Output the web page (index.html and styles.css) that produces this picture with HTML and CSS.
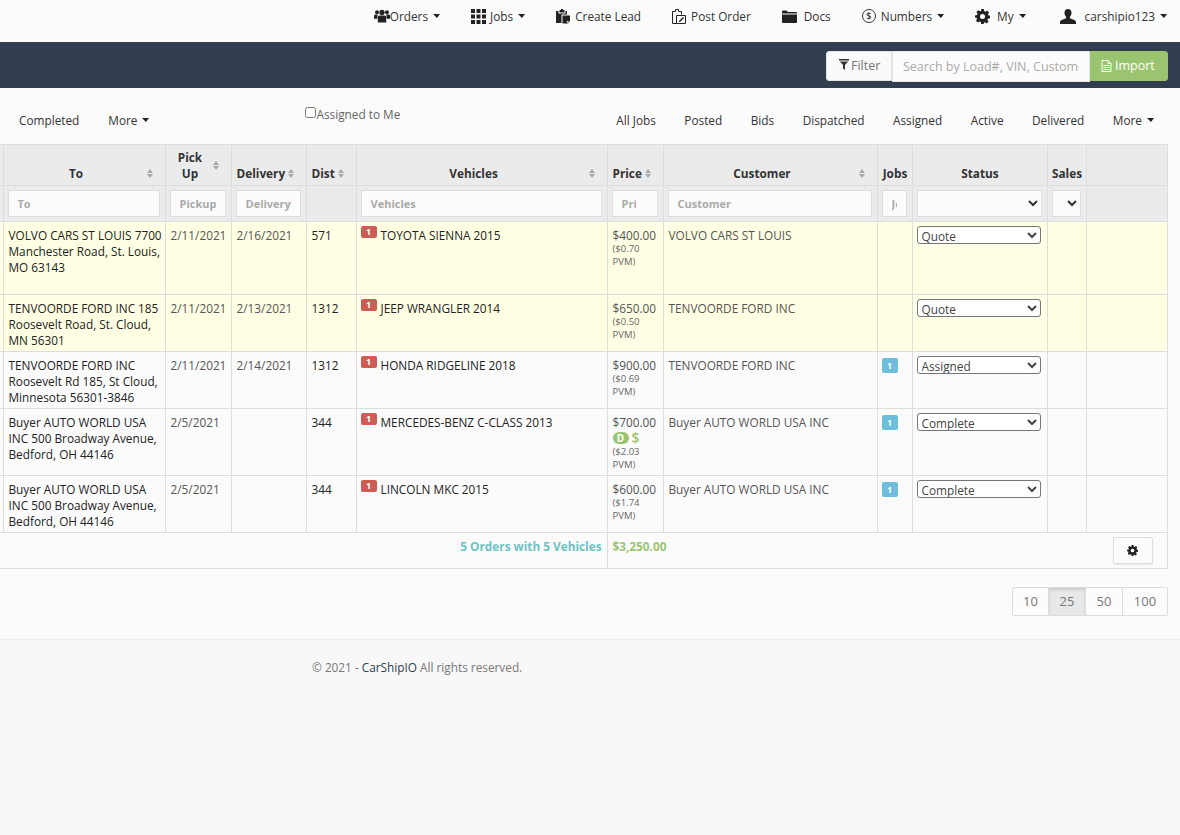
FILE: index.html
```html
<!DOCTYPE html>
<html lang="en">
<head>
<meta charset="utf-8">
<title>CarShipIO</title>
<link rel="stylesheet" href="styles.css">
</head>
<body>
<svg class="defs" width="0" height="0" aria-hidden="true">
  <symbol id="i-cog" viewBox="0 0 16 16"><path fill-rule="evenodd" d="M6.600 0h2.800l.4 2.200 1.300.6L13 1.600 15 3.600l-1.200 1.900.5 1.200 1.700.4v2.800l-2.200.4-.5 1.300 1.200 1.800-2 2-1.900-1.200-1.200.5L9.400 16H6.600l-.4-2.200-1.300-.5L3 14.500l-2-2 1.200-1.900-.5-1.200L0 9V6.800l2.200-.4.5-1.300L1.500 3.300l2-2 1.900 1.200 1.200-.5zM8 5.300a2.700 2.700 0 1 0 0 5.400 2.700 2.700 0 0 0 0-5.400z"/></symbol>
</svg>

<nav class="topnav">
  <a class="nav-item nav-orders"><svg class="ic ic-group" viewBox="0 0 17 14"><circle cx="3.200" cy="3" r="2.100"/><circle cx="13.800" cy="3" r="2.100"/><circle cx="8.500" cy="3.200" r="2.800"/><path d="M0 10V7q0-1.500 1.500-1.500h2.500L3.500 10zM17 10V7q0-1.500-1.500-1.500H13l.5 4.500z"/><path d="M4 14V8.500Q4 6.500 6 6.500h5q2 0 2 2V14z"/></svg>Orders<span class="caret"></span></a>
  <a class="nav-item"><svg class="ic ic-th" viewBox="0 0 15 15"><path d="M0 0h4v4H0zM5.500 0h4v4h-4zM11 0h4v4h-4zM0 5.500h4v4H0zM5.500 5.500h4v4h-4zM11 5.500h4v4h-4zM0 11h4v4H0zM5.500 11h4v4h-4zM11 11h4v4h-4z"/></svg>Jobs<span class="caret"></span></a>
  <a class="nav-item"><svg class="ic" viewBox="0 0 14 15"><path d="M3.500 1H5V0h2v1h1.500v2.500h-5zM0 2h2.500v2.500h7V2H11v3.500H5.500V14H0z"/><path d="M6.500 6.500H14v5.500l-2.500 2.500h-5zM11 12v2l2-2z"/></svg>Create Lead</a>
  <a class="nav-item"><svg class="ic" viewBox="0 0 14 15"><path fill="none" stroke="currentColor" d="M.5 2.500h3v-2h3v2h3v3M4.500 14.500h-4v-12M4.500 6.500h9v8h-9z"/><path d="M7 12l4-4 1 1-4 4H7z"/></svg>Post Order</a>
  <a class="nav-item"><svg class="ic ic-folder" viewBox="0 0 15 13"><path d="M0 1.500Q0 .5 1 .5h3.500l1.500 1.500h8Q15 2 15 3v.5H0zM0 4.500h15V12q0 1-1 1H1q-1 0-1-1z"/></svg>Docs</a>
  <a class="nav-item"><span class="ic-dollar">$</span>Numbers<span class="caret"></span></a>
  <a class="nav-item nav-my"><svg class="ic ic-cog"><use href="#i-cog"/></svg>My<span class="caret"></span></a>
  <a class="nav-item nav-user"><svg class="ic ic-user" viewBox="0 0 16 15"><path d="M8 0c2.300 0 3.500 1.700 3.500 3.800 0 1.700-.7 3.200-1.600 4v1.500c1.500.8 6.100 1.700 6.100 3.700v2H0v-2c0-2 4.600-2.900 6.100-3.700V7.800C5.200 7 4.500 5.500 4.500 3.800 4.500 1.700 5.700 0 8 0z"/></svg>carshipio123<span class="caret"></span></a>
</nav>

<header class="toolbar">
  <button class="btn-filter"><svg class="ic-filter" viewBox="0 0 10 11"><path d="M0 0h10v1.500H0zM.8 2.500h8.400L6 6v5L4 9.500V6z"/></svg>Filter</button>
  <input class="search" type="text" placeholder="Search by Load#, VIN, Customer">
  <button class="btn-import"><svg class="ic-file" viewBox="0 0 10 12"><path fill="none" stroke="currentColor" d="M.5.500h6l3 3v8h-9zM6.500.500v3h3M2 5.500h6M2 7.500h6M2 9.500h6"/></svg>Import</button>
</header>

<div class="tabs">
  <div class="tab-group">
    <a class="tab">Completed</a>
    <a class="tab">More<span class="caret"></span></a>
  </div>
  <label class="assigned"><input class="assigned-box" type="checkbox">Assigned to Me</label>
  <div class="tab-group">
    <a class="tab">All Jobs</a>
    <a class="tab">Posted</a>
    <a class="tab">Bids</a>
    <a class="tab">Dispatched</a>
    <a class="tab">Assigned</a>
    <a class="tab">Active</a>
    <a class="tab">Delivered</a>
    <a class="tab">More<span class="caret"></span></a>
  </div>
</div>

<table class="orders">
  <colgroup>
    <col class="c0"><col class="c-to"><col class="c-pick"><col class="c-del"><col class="c-dist"><col class="c-veh"><col class="c-price"><col class="c-cust"><col class="c-jobs"><col class="c-status"><col class="c-sales"><col class="c-last">
  </colgroup>
  <thead>
    <tr class="head">
      <th></th>
      <th><div class="th-in"><span class="th-label">To</span><span class="sort sort-far"></span></div></th>
      <th><div class="th-in"><span class="th-label">Pick Up</span><span class="sort sort-far"></span></div></th>
      <th><div class="th-in"><span class="th-label th-left">Delivery</span><span class="sort"></span></div></th>
      <th><div class="th-in"><span class="th-label th-left">Dist</span><span class="sort"></span></div></th>
      <th><div class="th-in"><span class="th-label">Vehicles</span><span class="sort sort-far"></span></div></th>
      <th><div class="th-in"><span class="th-label th-left">Price</span><span class="sort"></span></div></th>
      <th><div class="th-in"><span class="th-label">Customer</span><span class="sort sort-far"></span></div></th>
      <th><div class="th-in"><span class="th-label">Jobs</span></div></th>
      <th><div class="th-in"><span class="th-label">Status</span></div></th>
      <th><div class="th-in"><span class="th-label">Sales</span></div></th>
      <th></th>
    </tr>
    <tr class="filters">
      <th></th>
      <th><input class="f" placeholder="To"></th>
      <th><input class="f" placeholder="Pickup"></th>
      <th><input class="f" placeholder="Delivery"></th>
      <th></th>
      <th><input class="f" placeholder="Vehicles"></th>
      <th><input class="f f-price" placeholder="Price"></th>
      <th><input class="f" placeholder="Customer"></th>
      <th><input class="f" placeholder="Jobs"></th>
      <th><select class="f f-sel"><option></option></select></th>
      <th><select class="f f-sel"><option></option></select></th>
      <th></th>
    </tr>
  </thead>
  <tbody>
    <tr class="row-new row-tall">
      <td></td>
      <td>VOLVO CARS ST LOUIS 7700 Manchester Road, St. Louis, MO 63143</td>
      <td class="muted">2/11/2021</td><td class="muted">2/16/2021</td><td>571</td>
      <td><span class="veh-n">1</span><span class="veh">TOYOTA SIENNA 2015</span></td>
      <td class="muted">$400.00<small class="pvm">($0.70 PVM)</small></td>
      <td class="muted">VOLVO CARS ST LOUIS</td><td></td>
      <td><select class="st"><option>Quote</option></select></td><td></td><td></td>
    </tr>
    <tr class="row-new">
      <td></td>
      <td>TENVOORDE FORD INC 185 Roosevelt Road, St. Cloud, MN 56301</td>
      <td class="muted">2/11/2021</td><td class="muted">2/13/2021</td><td>1312</td>
      <td><span class="veh-n">1</span><span class="veh">JEEP WRANGLER 2014</span></td>
      <td class="muted">$650.00<small class="pvm">($0.50 PVM)</small></td>
      <td class="muted">TENVOORDE FORD INC</td><td></td>
      <td><select class="st"><option>Quote</option></select></td><td></td><td></td>
    </tr>
    <tr>
      <td></td>
      <td>TENVOORDE FORD INC Roosevelt Rd 185, St Cloud, Minnesota 56301-3846</td>
      <td class="muted">2/11/2021</td><td class="muted">2/14/2021</td><td>1312</td>
      <td><span class="veh-n">1</span><span class="veh">HONDA RIDGELINE 2018</span></td>
      <td class="muted">$900.00<small class="pvm">($0.69 PVM)</small></td>
      <td class="muted">TENVOORDE FORD INC</td>
      <td><span class="job-n">1</span></td>
      <td><select class="st"><option>Assigned</option></select></td><td></td><td></td>
    </tr>
    <tr class="row-paid">
      <td></td>
      <td>Buyer AUTO WORLD USA INC 500 Broadway Avenue, Bedford, OH 44146</td>
      <td class="muted">2/5/2021</td><td></td><td>344</td>
      <td><span class="veh-n">1</span><span class="veh">MERCEDES-BENZ C-CLASS 2013</span></td>
      <td class="muted">$700.00<div class="paid"><span class="pill-d">D</span><span class="paid-s">$</span></div><small class="pvm">($2.03 PVM)</small></td>
      <td class="muted">Buyer AUTO WORLD USA INC</td>
      <td><span class="job-n">1</span></td>
      <td><select class="st"><option>Complete</option></select></td><td></td><td></td>
    </tr>
    <tr>
      <td></td>
      <td>Buyer AUTO WORLD USA INC 500 Broadway Avenue, Bedford, OH 44146</td>
      <td class="muted">2/5/2021</td><td></td><td>344</td>
      <td><span class="veh-n">1</span><span class="veh">LINCOLN MKC 2015</span></td>
      <td class="muted">$600.00<small class="pvm">($1.74 PVM)</small></td>
      <td class="muted">Buyer AUTO WORLD USA INC</td>
      <td><span class="job-n">1</span></td>
      <td><select class="st"><option>Complete</option></select></td><td></td><td></td>
    </tr>
  </tbody>
  <tfoot>
    <tr class="foot">
      <td colspan="6" class="sum-l">5 Orders with 5 Vehicles</td>
      <td colspan="6" class="sum-r"><div class="sum-in"><span class="sum-v">$3,250.00</span><button class="btn-gear"><svg class="gear"><use href="#i-cog"/></svg></button></div></td>
    </tr>
  </tfoot>
</table>

<div class="pager-wrap">
  <div class="pager">
    <a class="pg">10</a><a class="pg pg-on">25</a><a class="pg">50</a><a class="pg">100</a>
  </div>
</div>

<footer class="foot-page">
  <p class="copy">© 2021 - <a class="brand">CarShipIO</a> All rights reserved.</p>
</footer>
</body>
</html>
```

FILE: styles.css
```css
* { box-sizing: border-box; }
html, body { height: 100%; }
body {
  margin: 0;
  display: flex;
  flex-direction: column;
  min-height: 835px;
  background: #fbfbfb;
  font-family: "Open Sans", "Noto Sans", sans-serif;
  font-size: 11.8px;
  line-height: 16px;
  color: #333;
  overflow: hidden;
}
.defs { position: absolute; }

.topnav {
  height: 42px;
  display: flex;
  justify-content: flex-end;
  align-items: center;
  gap: 31px;
  padding: 0 13px 10px 0;
  flex: none;
}
.nav-item { display: flex; align-items: center; color: #333; white-space: nowrap; }
.ic { width: 14px; height: 15px; margin-right: 5px; fill: #222; color: #222; flex: none; }
.ic-group { width: 16px; height: 14px; margin-right: 0; }
.ic-th { width: 15px; height: 15px; margin-right: 4px; }
.ic-folder { width: 15px; height: 13px; margin-right: 7px; }
.ic-cog { width: 15px; height: 15px; margin-right: 7px; }
.ic-user { width: 16px; height: 15px; margin-right: 9px; }
.nav-user { margin-left: 3px; }
.ic-dollar {
  width: 14px; height: 14px; margin-right: 5px;
  border: 1px solid #333; border-radius: 50%;
  font-size: 9px; line-height: 12px; text-align: center; font-weight: 600;
}
.caret {
  display: inline-block;
  margin-left: 5px;
  border-top: 4px solid #222;
  border-left: 4px solid transparent;
  border-right: 3px solid transparent;
}

.toolbar {
  height: 46px;
  flex: none;
  background: #323e4f;
  display: flex;
  justify-content: flex-end;
  align-items: flex-start;
  padding: 9px 12px 0 0;
}
.btn-filter, .btn-import {
  height: 30px;
  font: inherit;
  font-size: 12.5px;
  display: flex;
  align-items: center;
  border: 1px solid #e3e3e3;
}
.btn-filter { width: 66px; padding: 0 0 0 12px; background: #fafafa; color: #777; border-radius: 3px 0 0 3px; }
.ic-filter { width: 10px; height: 11px; margin-right: 2px; fill: #333; margin-top: -3px; }
.search {
  width: 198px;
  height: 31px;
  border: 1px solid #e6e6e6;
  background: #fcfcfc;
  padding: 0 10px;
  font: inherit;
  font-size: 12.5px;
  outline: 0;
}
.search::placeholder { color: #aaa; opacity: 1; }
.btn-import { width: 78px; padding: 0 0 0 10px; background: #9bc471; border-color: #9bc471; color: #fff; border-radius: 0 3px 3px 0; }
.ic-file { width: 11px; height: 12px; margin-right: 3px; color: #fff; }

.tabs {
  height: 56px;
  flex: none;
  display: flex;
  align-items: flex-start;
}
.tab-group { display: flex; gap: 28.5px; padding: 24px 0 0 0; }
.tab-group:first-child { gap: 29px; padding-left: 19px; }
.tab-group:last-child { margin-left: auto; padding-right: 26px; }
.tab { color: #333; white-space: nowrap; display: flex; align-items: center; }
.assigned { display: flex; align-items: center; margin: 18px 0 0 156px; color: #666; }
.assigned-box { width: 11px; height: 11px; margin: 1px 0 0; align-self: flex-start; }

.orders {
  width: 1167px;
  flex: none;
  table-layout: fixed;
  border-collapse: collapse;
  border-right: 1px solid #ddd;
  border-bottom: 1px solid #ddd;
}
.c0 { width: 3px; }
.c-to { width: 162px; }
.c-pick { width: 66px; }
.c-del { width: 75px; }
.c-dist { width: 50px; }
.c-veh { width: 251px; }
.c-price { width: 56px; }
.c-cust { width: 214px; }
.c-jobs { width: 35px; }
.c-status { width: 135px; }
.c-sales { width: 39px; }
.c-last { width: 81px; }
.orders th, .orders td { border: 1px solid #ddd; }
.orders th:first-child, .orders td:first-child { border-left: 0; }
.orders thead th { background: #ebebeb; font-weight: 700; color: #333; vertical-align: bottom; padding: 0 4px 0 5px; }
.orders .head th { height: 41px; padding-bottom: 4px; }
.th-in { display: flex; align-items: center; justify-content: center; gap: 3px; }
.th-label { flex: 1 1 auto; text-align: center; }
.th-label.th-left { flex: none; text-align: left; }
.th-in:has(.th-left) { justify-content: flex-start; }
.sort { flex: none; width: 7px; height: 9px; position: relative; }
.sort-far { margin-right: 7px; }
.sort::before, .sort::after {
  content: "";
  position: absolute;
  left: 0;
  border-left: 3.5px solid transparent;
  border-right: 3.5px solid transparent;
}
.sort::before { top: 0; border-bottom: 4px solid #a8a8a8; }
.sort::after { bottom: 0; border-top: 4px solid #a8a8a8; }
.orders .filters th { height: 36px; padding: 4px 5px 4px 4px; vertical-align: top; }
.f {
  display: block;
  width: 100%;
  height: 27px;
  border: 1px solid #ddd;
  background: #fcfcfc;
  padding: 0 9px;
  font: inherit;
  font-size: 11px;
  font-weight: 700;
  color: #333;
  outline: 0;
}
.f::placeholder { color: #aaa; opacity: 1; }
.f.f-price { padding-right: 21px; }
.f.f-sel { padding: 0 4px; }

.orders td { padding: 5px 1px 2px 5px; vertical-align: top; color: #222; height: 57px; }
.row-new td { background: #ffffe3; }
.orders .row-tall td { height: 73px; }
.orders .row-paid td { height: 67px; }
.orders td.muted { color: #555; }
.veh-n {
  display: inline-block;
  width: 16px; height: 12px;
  margin: -1px 4px 0 -1px;
  background: #cd5c55;
  border-radius: 2px;
  color: #fff;
  font-size: 9px;
  font-weight: 700;
  line-height: 11px;
  text-align: center;
  vertical-align: top;
}
.veh { color: #222; }
.pvm { display: block; font-size: 9.5px; line-height: 12.5px; color: #666; }
.paid { display: flex; align-items: center; height: 16px; gap: 3px; }
.pill-d {
  width: 16px; height: 12px;
  background: #9bc471;
  border-radius: 6px;
  color: #fff;
  font-size: 10px;
  font-weight: 700;
  line-height: 12px;
  text-align: center;
}
.paid-s { color: #9bc471; font-size: 14px; line-height: 14px; font-weight: 600; }
.job-n {
  display: block;
  width: 16px; height: 15px;
  margin: 1px 0 0 -1px;
  background: #6cbedb;
  border-radius: 2px;
  color: #fff;
  font-size: 9px;
  font-weight: 700;
  line-height: 15px;
  text-align: center;
}
.st {
  display: block;
  width: 124px;
  height: 18px;
  margin: -1px 0 0 -1px;
  border: 1px solid #767676;
  border-radius: 3px;
  background: #fff;
  font: inherit;
  line-height: 14px;
  color: #444;
  padding: 0;
}
.orders .foot td { height: 36px; padding: 5px 5px 3px; vertical-align: top; }
.orders .foot .sum-l { text-align: right; color: #6cc3c6; font-weight: 700; }
.orders .foot .sum-r { padding: 4px 14px 3px 5px; }
.sum-in { display: flex; justify-content: space-between; align-items: flex-start; }
.sum-v { margin-top: 1px; color: #9bc471; font-weight: 700; }
.btn-gear {
  width: 40px; height: 27px;
  border: 1px solid #ddd;
  border-radius: 2px;
  background: #fcfcfc;
  padding: 0;
  display: flex;
  align-items: center;
  justify-content: center;
  box-shadow: 0 1px 1px rgba(0,0,0,.08);
}
.gear { width: 11px; height: 11px; fill: #222; }

.pager-wrap { height: 70px; flex: none; display: flex; justify-content: flex-end; padding: 18px 12px 0 0; }
.pager { display: flex; height: 29px; }
.pg {
  width: 37px;
  border: 1px solid #ddd;
  border-left: 0;
  font-size: 13px;
  line-height: 27px;
  text-align: center;
  color: #777;
  background: #fcfcfc;
}
.pg:first-child { border-left: 1px solid #ddd; border-radius: 2px 0 0 2px; }
.pg:last-child { width: 45px; border-radius: 0 2px 2px 0; }
.pg-on { background: #e8e8e8; box-shadow: inset 0 2px 3px rgba(0,0,0,.12); }

.foot-page { flex: 1; background: #f8f8f8; border-top: 1px solid #ececec; padding: 19px 0 0 312px; }
.copy { margin: 0; color: #777; }
.brand { color: #2c3e50; }
```
